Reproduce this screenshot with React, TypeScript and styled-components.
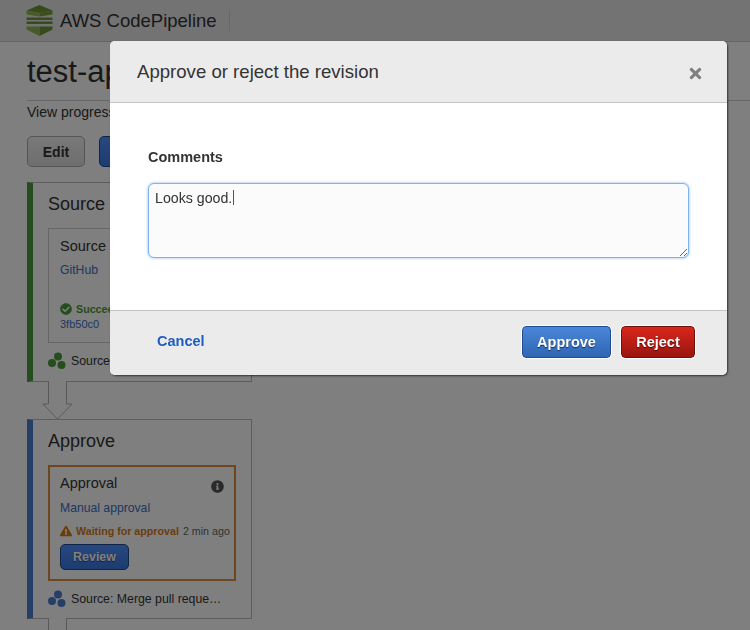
import React from "react";
import styled, { createGlobalStyle } from "styled-components";
import {
  FaCheckCircle,
  FaExclamationTriangle,
  FaInfoCircle,
  FaTimes,
} from "react-icons/fa";

const GlobalStyle = createGlobalStyle`
  html, body {
    margin: 0;
    height: 630px;
    overflow: hidden;
    background: #fff;
    font-family: "Liberation Sans", Arial, sans-serif;
    color: #333;
  }
  * { box-sizing: border-box; }
`;

const TopBar = styled.header`
  height: 42px;
  background: #e6e6e6;
  border-bottom: 1px solid #c8c8c8;
  display: flex;
  align-items: center;
  padding-left: 26px;
`;

const Brand = styled.div`
  display: flex;
  align-items: center;
  gap: 7px;
  font-size: 18.5px;
  color: #333;
  padding-right: 12px;
  border-right: 1px solid #ccd;
  height: 21px;
`;

const Main = styled.main`
  padding: 0 0 0 27px;
`;

const PageTitle = styled.h1`
  margin: 0;
  height: 59px;
  padding-top: 12px;
  font-size: 31px;
  line-height: 36px;
  font-weight: 400;
  color: #333;
  border-bottom: 1px solid #ccc;
`;

const Subtitle = styled.p`
  margin: 0;
  padding-top: 2px;
  height: 35px;
  font-size: 14px;
  line-height: 18px;
  color: #333;
`;

const Toolbar = styled.div`
  display: flex;
  gap: 14px;
  height: 46px;
`;

const ToolButton = styled.button<{ $primary?: boolean }>`
  height: 31px;
  width: ${(p) => (p.$primary ? "120px" : "58px")};
  border-radius: 5px;
  border: 1px solid ${(p) => (p.$primary ? "#1e4b91" : "#aaa")};
  background: ${(p) =>
    p.$primary
      ? "linear-gradient(#5090ff, #3a78e0)"
      : "linear-gradient(#f2f2f2, #dcdcdc)"};
  color: ${(p) => (p.$primary ? "#fff" : "#333")};
  font: 700 14px "Liberation Sans", Arial, sans-serif;
`;

const Stage = styled.section<{ $color: string }>`
  width: 225px;
  height: 200px;
  border: 1px solid #bbb;
  border-left: 6px solid ${(p) => (p.$color === "green" ? "#4a9a3a" : "#4a7fd0")};
  padding: 9px 15px 0 15px;
`;

const StageTitle = styled.h2`
  margin: 0 0 12px;
  font-size: 18px;
  line-height: 24px;
  font-weight: 400;
  color: #333;
`;

const Action = styled.div<{ $waiting?: boolean }>`
  position: relative;
  width: 188px;
  height: ${(p) => (p.$waiting ? "116px" : "115px")};
  border: ${(p) => (p.$waiting ? "2px solid #dc8e40" : "1px solid #ccc")};
  padding: ${(p) => (p.$waiting ? "6px 10px 0" : "7px 11px 0")};
`;

const ActionName = styled.div`
  font-size: 14.5px;
  line-height: 20px;
  color: #333;
`;

const ActionLink = styled.a<{ $gap?: number }>`
  display: block;
  margin-top: ${(p) => (p.$gap ? "6px" : "5px")};
  height: ${(p) => p.$gap ?? 40}px;
  font-size: 12.2px;
  line-height: 18px;
  color: #3b6fc2;
`;

const InfoIcon = styled.span`
  position: absolute;
  right: 10px;
  top: 13px;
  font-size: 13px;
  line-height: 0;
  color: #555;
`;

const Status = styled.div<{ $color: string }>`
  display: flex;
  align-items: center;
  gap: 4px;
  white-space: nowrap;
  font-size: 10.7px;
  line-height: 16px;
  color: ${(p) => p.$color};

  svg {
    width: 12px;
    height: 12px;
    flex: none;
  }
  b {
    font-weight: 700;
  }
`;

const Muted = styled.span`
  color: #666;
`;

const Revision = styled.a`
  display: block;
  font-size: 11px;
  line-height: 14px;
  color: #3b6fc2;
`;

const ReviewButton = styled.button`
  display: block;
  margin-top: 5px;
  width: 69px;
  height: 26px;
  border-radius: 5px;
  border: 1px solid #1e4b91;
  background: linear-gradient(#5090ff, #3a78e0);
  color: #fff;
  font: 700 12.5px "Liberation Sans", Arial, sans-serif;
  text-shadow: 0 1px 1px rgba(0, 0, 0, 0.5);
  padding: 0;
`;

const SourceRow = styled.div`
  display: flex;
  align-items: center;
  gap: 5px;
  margin-top: 9px;
  width: 188px;
  font-size: 12.3px;
  line-height: 18px;
  color: #333;
  white-space: nowrap;
`;

const ArrowWrap = styled.div`
  width: 225px;
  height: 38px;
  margin-top: -1px;
  padding-left: 14px;
  line-height: 0;
`;

const Overlay = styled.div`
  position: fixed;
  inset: 0;
  background: rgba(0, 0, 0, 0.5);
`;

const Modal = styled.div`
  position: absolute;
  left: 110px;
  top: 41px;
  width: 617px;
  height: 334px;
  background: #fff;
  border-radius: 5px;
  box-shadow: 1px 1px 2px rgba(0, 0, 0, 0.6);
  overflow: hidden;
  display: flex;
  flex-direction: column;
`;

const ModalHeader = styled.div`
  height: 62px;
  flex: none;
  background: #ebebeb;
  border-bottom: 1px solid #c4c4c4;
  display: flex;
  align-items: center;
  justify-content: space-between;
  padding: 0 23px 0 27px;
  font-size: 18.6px;
  color: #333;
`;

const CloseIcon = styled.span`
  font-size: 17px;
  line-height: 0;
  color: #808080;
  margin-top: 3px;
`;

const ModalBody = styled.div`
  flex: 1;
  padding: 46px 38px 0;
`;

const FieldLabel = styled.label`
  display: block;
  font-size: 14.5px;
  font-weight: 700;
  line-height: 16px;
  color: #333;
  margin-bottom: 18px;
`;

const TextBox = styled.div`
  position: relative;
  width: 541px;
  height: 75px;
`;

const CommentInput = styled.textarea`
  display: block;
  width: 100%;
  height: 100%;
  margin: 0;
  padding: 5px 6px;
  border: 1px solid #7fb2ee;
  border-radius: 6px;
  background: #fbfbfb;
  box-shadow: 0 0 3px rgba(90, 150, 235, 0.7);
  outline: none;
  font: 14.2px/18px "Liberation Sans", Arial, sans-serif;
  color: #333;
`;

const Caret = styled.span`
  position: absolute;
  left: 85px;
  top: 7px;
  width: 1px;
  height: 15px;
  background: #555;
`;

const ModalFooter = styled.div`
  height: 65px;
  flex: none;
  background: #ebebeb;
  border-top: 1px solid #c4c4c4;
  display: flex;
  align-items: center;
  padding: 0 32px 2px 47px;
  gap: 10px;
`;

const CancelLink = styled.a`
  font-size: 14.5px;
  font-weight: 700;
  color: #1f5cc0;
  margin-right: auto;
  margin-bottom: 3px;
`;

const ModalButton = styled.button<{ $danger?: boolean }>`
  height: 32px;
  padding: 0;
  width: ${(p) => (p.$danger ? "74px" : "89px")};
  border-radius: 4px;
  border: 1px solid ${(p) => (p.$danger ? "#6e0f0a" : "#1e4b91")};
  outline: 1px solid #fff;
  background: ${(p) =>
    p.$danger
      ? "linear-gradient(#d9261c, #9a1510)"
      : "linear-gradient(#4a86d8, #2f66b5)"};
  color: #fff;
  font: 700 14.5px "Liberation Sans", Arial, sans-serif;
  text-shadow: 0 1px 1px rgba(0, 0, 0, 0.6);
`;

const Logo = () => (
  <svg width="27" height="32" viewBox="0 0 27 32">
    <path d="M13.5 0 26.500 5.500 13.500 8 .5 5.500z" fill="#6f9436" />
    <path d="M.5 5.500 13.500 8v3.500L.5 9.500z" fill="#94b454" />
    <path d="M26.500 5.500 13.500 8v3.500l13-2z" fill="#7a9e3e" />
    <path d="M.5 12.500h26V15H.5zM.5 16.500h26V19H.5z" fill="#6f9436" />
    <path d="M.5 21.500h13V31l-13-6.500z" fill="#94b454" />
    <path d="M26.500 21.500h-13V31l13-6.500z" fill="#6f9436" />
  </svg>
);

const Dots = ({ color }: { color: string }) => (
  <svg width="18" height="18" viewBox="0 0 18 18" fill={color}>
    <circle cx="10" cy="4.500" r="4" />
    <circle cx="4" cy="11" r="4" />
    <circle cx="13.500" cy="13" r="4" />
  </svg>
);

const Arrow = () => (
  <svg width="32" height="38" viewBox="0 0 32 38">
    <path
      d="M7.500 0v23H2L16.500 38 31 23H25.500V0"
      fill="#fff"
      stroke="#b4b4b4"
      strokeWidth="1"
    />
  </svg>
);

const App = () => {
  return (
    <>
      <GlobalStyle />
      <TopBar>
        <Brand>
          <Logo />
          AWS CodePipeline
        </Brand>
      </TopBar>
      <Main>
        <PageTitle>test-approval</PageTitle>
        <Subtitle>View progress and manage your pipeline.</Subtitle>
        <Toolbar>
          <ToolButton>Edit</ToolButton>
          <ToolButton $primary>Release</ToolButton>
        </Toolbar>
        <Stage $color="green">
          <StageTitle>Source</StageTitle>
          <Action>
            <ActionName>Source</ActionName>
            <ActionLink>GitHub</ActionLink>
            <Status $color="#4a9a3a">
              <FaCheckCircle />
              <b>Succeeded</b>
            </Status>
            <Revision>3fb50c0</Revision>
          </Action>
          <SourceRow>
            <Dots color="#4a9a3a" />
            Source: Merge pull reque…
          </SourceRow>
        </Stage>
        <ArrowWrap>
          <Arrow />
        </ArrowWrap>
        <Stage $color="blue">
          <StageTitle>Approve</StageTitle>
          <Action $waiting>
            <ActionName>Approval</ActionName>
            <ActionLink $gap={24}>Manual approval</ActionLink>
            <InfoIcon>
              <FaInfoCircle />
            </InfoIcon>
            <Status $color="#d87a18">
              <FaExclamationTriangle />
              <b>Waiting for approval</b> <Muted>2 min ago</Muted>
            </Status>
            <ReviewButton>Review</ReviewButton>
          </Action>
          <SourceRow>
            <Dots color="#4a7fd0" />
            Source: Merge pull reque…
          </SourceRow>
        </Stage>
        <ArrowWrap>
          <Arrow />
        </ArrowWrap>
      </Main>
      <Overlay>
        <Modal>
          <ModalHeader>
            Approve or reject the revision
            <CloseIcon>
              <FaTimes />
            </CloseIcon>
          </ModalHeader>
          <ModalBody>
            <FieldLabel htmlFor="comments">Comments</FieldLabel>
            <TextBox>
              <CommentInput id="comments" defaultValue="Looks good." />
              <Caret />
            </TextBox>
          </ModalBody>
          <ModalFooter>
            <CancelLink>Cancel</CancelLink>
            <ModalButton>Approve</ModalButton>
            <ModalButton $danger>Reject</ModalButton>
          </ModalFooter>
        </Modal>
      </Overlay>
    </>
  );
};

export default App;
